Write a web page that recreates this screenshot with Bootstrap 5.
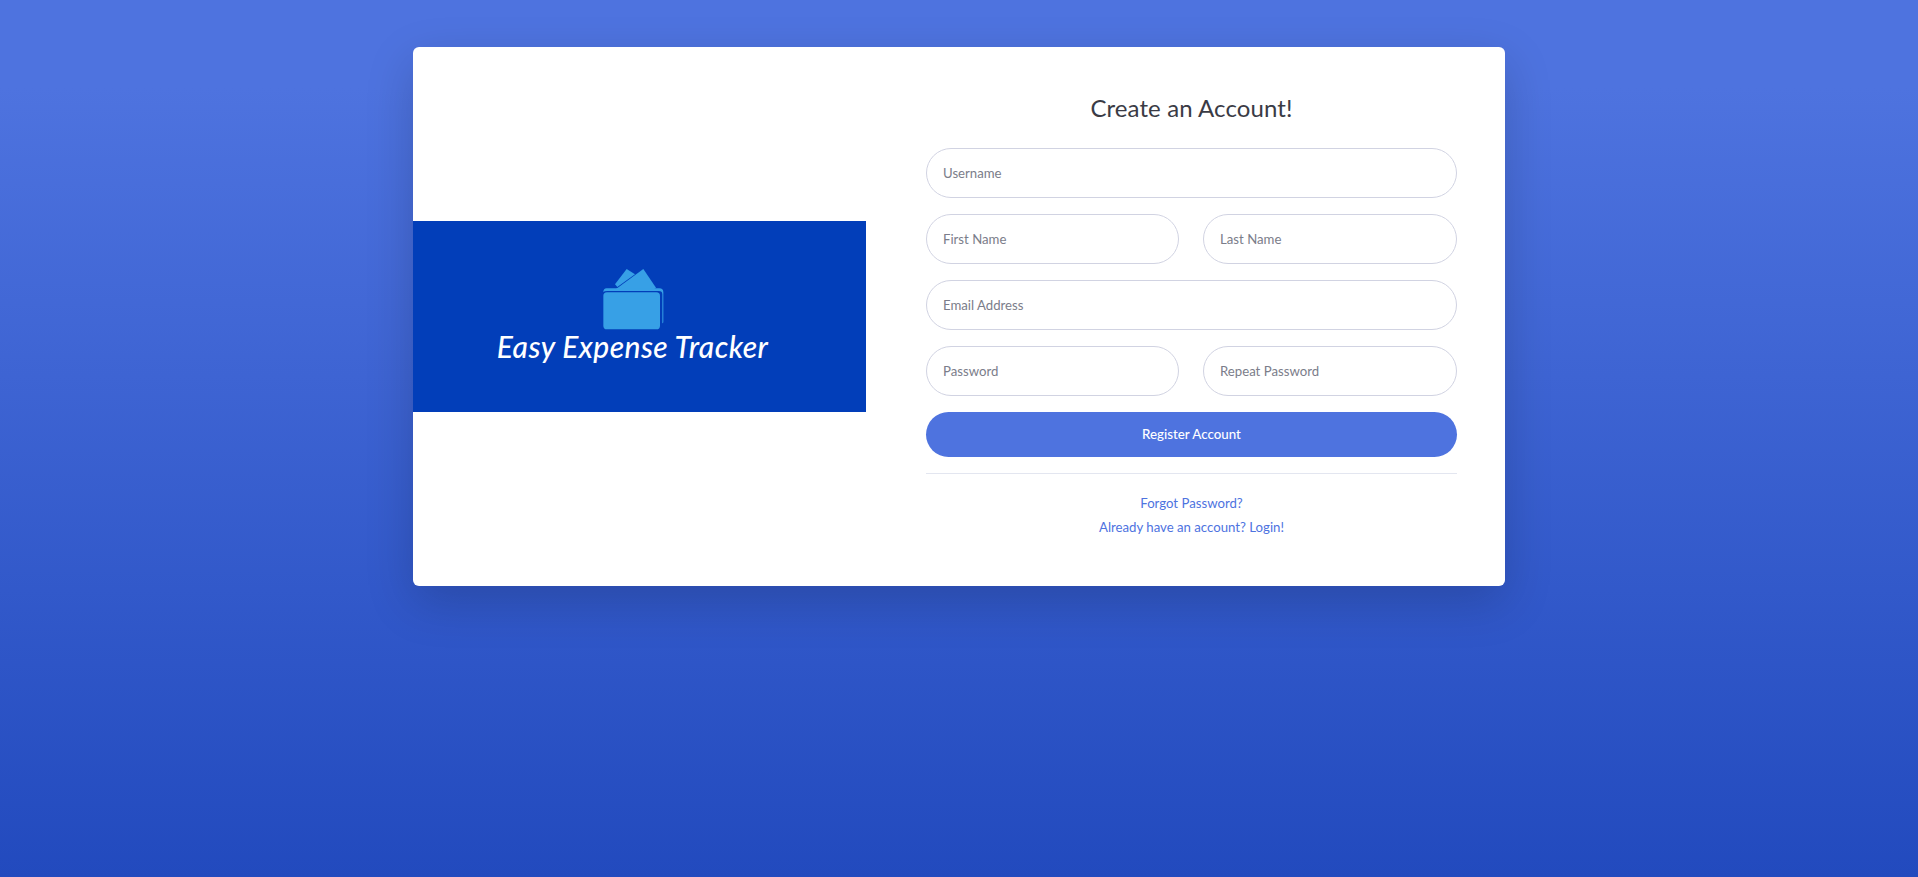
<!DOCTYPE html>
<html lang="en">
<head>
<meta charset="utf-8">
<title>Create an Account</title>
<link href="https://cdn.jsdelivr.net/npm/bootstrap@5.3.0/dist/css/bootstrap.min.css" rel="stylesheet">
<style>
html,body{height:100%}
body.page-bg{min-height:877px;margin:0;background:linear-gradient(180deg,#4e73df 10%,#224abe 100%);font-family:"Lato","Noto Sans",sans-serif;color:#858796;overflow:hidden}
.reg-card{width:1092px;height:539px;margin:47px auto 0;border:0;border-radius:6px;box-shadow:0 1rem 3rem rgba(0,0,0,.175);overflow:hidden;background:#fff}
.brand-side{width:453px;flex:0 0 453px}
.brand-panel{height:191px;background:#023eb9;padding-right:14px;padding-top:44px}
.brand-icon{display:block;width:68px;height:67px;margin-left:2px}
.brand-name{font-family:"Lato",sans-serif;font-style:italic;font-weight:500;font-size:30px;line-height:30px;color:#fff;margin-top:-1px;white-space:nowrap;letter-spacing:.42px}
.form-side{width:531px;margin-left:60px;padding-top:44px}
.reg-title{font-size:24px;line-height:34px;font-weight:400;color:#3a3b45;text-align:center;margin:0 0 23px;letter-spacing:.1px}
.pill-input{height:50px;border:1px solid #d1d3e2;border-radius:25px;padding:0 16px;font-size:13.2px;color:#6e707e;font-family:inherit}
.pill-input::placeholder{color:#7b7d8a;opacity:1}
.field-row{gap:24px;margin-bottom:16px}
.field-row .pill-input{flex:1 1 0;min-width:0}
.field-row .pill-input:first-child:not(:last-child){flex:0 0 253px}
.pill-btn{height:45px;border:0;border-radius:23px;background:#4e73df;color:#fff;font-size:13.3px;font-weight:500;padding:0;display:flex;align-items:center;justify-content:center}
.pill-btn:hover{background:#2e59d9;color:#fff}
.split-line{margin:16px 0 19px;border:0;border-top:1px solid #e3e6f0;opacity:1}
.reg-link{display:block;font-size:13.2px;line-height:20px;color:#4e73df;text-decoration:none;text-align:center;margin-bottom:4px}
</style>
</head>
<body class="page-bg">
<div class="card reg-card">
  <div class="d-flex h-100">
    <div class="brand-side d-flex align-items-center">
      <div class="brand-panel w-100 d-flex flex-column align-items-center">
        <svg class="brand-icon" viewBox="60 30 204 201" aria-hidden="true">
          <path d="M105 88 140 42 165 58 112 96Z" fill="#37a0e6"/>
          <path d="M105 104 190 42 228 98 214 107Z" fill="#37a0e6"/>
          <path d="M80 100H238Q250 100 250 112V200Q250 205 247 205V118Q247 108 236 108H82Q72 108 70 112Q70 100 80 100Z" fill="#37a0e6"/>
          <rect x="70" y="112" width="170" height="111" rx="11" fill="#37a0e6"/>
        </svg>
        <div class="brand-name">Easy Expense Tracker</div>
      </div>
    </div>
    <div class="form-side">
      <h1 class="reg-title">Create an Account!</h1>
      <form>
        <div class="d-flex field-row"><input class="form-control pill-input" type="text" placeholder="Username"></div>
        <div class="d-flex field-row"><input class="form-control pill-input" type="text" placeholder="First Name"><input class="form-control pill-input" type="text" placeholder="Last Name"></div>
        <div class="d-flex field-row"><input class="form-control pill-input" type="email" placeholder="Email Address"></div>
        <div class="d-flex field-row"><input class="form-control pill-input" type="password" placeholder="Password"><input class="form-control pill-input" type="password" placeholder="Repeat Password"></div>
        <a href="#" class="btn pill-btn w-100">Register Account</a>
      </form>
      <hr class="split-line">
      <a href="#" class="reg-link">Forgot Password?</a>
      <a href="#" class="reg-link">Already have an account? Login!</a>
    </div>
  </div>
</div>
<script src="https://cdn.jsdelivr.net/npm/bootstrap@5.3.0/dist/js/bootstrap.bundle.min.js"></script>
</body>
</html>
